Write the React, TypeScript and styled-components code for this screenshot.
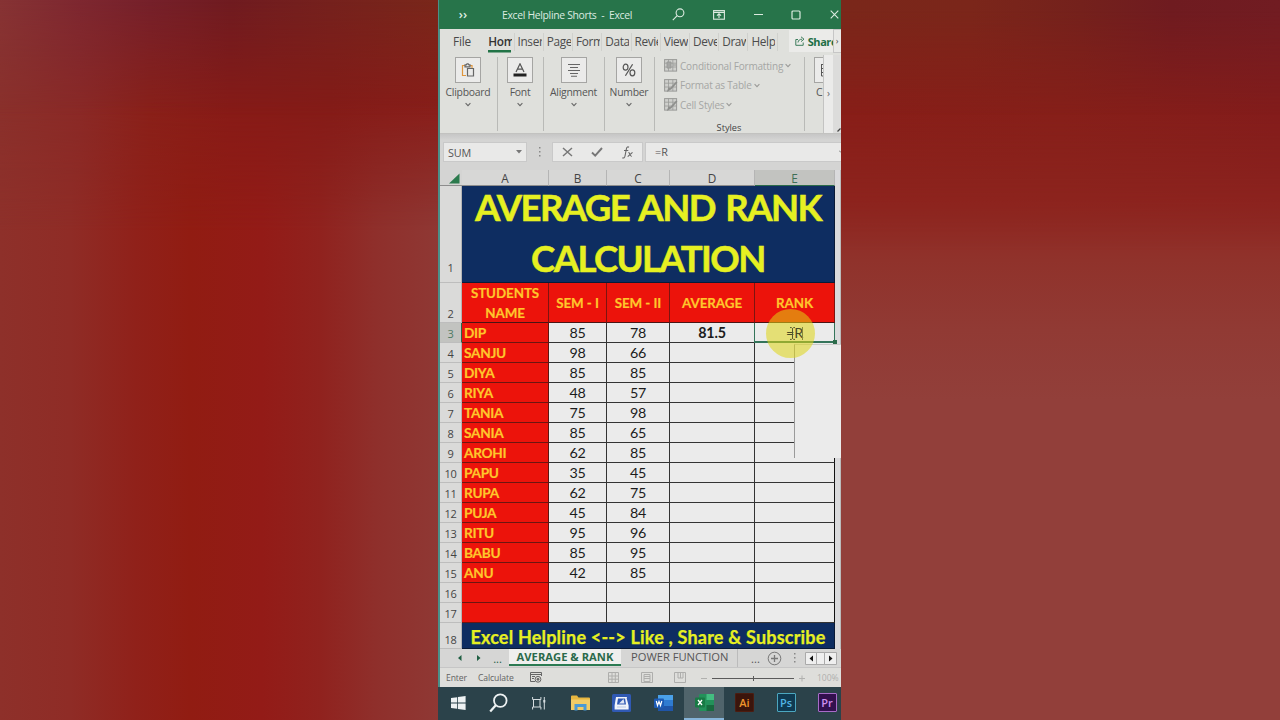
import React from "react";
import styled, { createGlobalStyle } from "styled-components";

const UI = `"Open Sans", "Noto Sans", sans-serif`;
const SHEET = `Lato, "Open Sans", sans-serif`;

const Global = createGlobalStyle`
  *, *::before, *::after { box-sizing: border-box; }
  body { margin: 0; background: #8f2a26; overflow: hidden; }
  svg { flex: none; }
`;

const Page = styled.main`
  display: grid;
  grid-template-columns: 438px 403px 439px;
  height: 720px;
  width: 1280px;
  overflow: hidden;
  font-family: ${UI};
`;

const Backdrop = styled.div<{ $side: "left" | "right" }>`
  display: grid;
  background: ${(p) =>
    p.$side === "left"
      ? "linear-gradient(90deg,#8e302a 0,#8f2c26 70px,#90211a 135px,#911c12 190px,#931b17 262px,#90221e 320px,#8f2f2b 375px,#8f3834 438px)"
      : "linear-gradient(180deg,#902620 200px,#90322b 260px,#913a34 330px,#923f3a 400px,#923f3a)"};
  > * { grid-area: 1 / 1; }
`;

const Fade = styled.div<{ $paint: string; $from: number; $to: number }>`
  background: linear-gradient(90deg, ${(p) => p.$paint});
  mask-image: linear-gradient(180deg, #000 ${(p) => p.$from}px, transparent ${(p) => p.$to}px);
`;

const Phone = styled.section`
  display: flex;
  flex-direction: column;
  width: 403px;
  height: 720px;
  overflow: hidden;
  position: relative;
  background: #d4d4d3;
`;

const Workbook = styled.div`
  display: flex;
  flex-direction: column;
  height: 687px;
  border-left: 2px solid #4b8f89;
`;

const TitleBar = styled.header`
  display: grid;
  grid-template-columns: 46px 172px 42px 40px 38px 38px 38px;
  align-items: center;
  justify-items: center;
  height: 29px;
  flex: none;
  margin-left: -1px;
  background: #27744a;
  color: #dcebe0;
  font-size: 11px;
  overflow: hidden;
`;
const TitleText = styled.span`
  font-size: 10.4px;
  letter-spacing: -0.32px;
  white-space: pre;
  justify-self: start;
  padding-left: 17px;
  padding-top: 1px;
`;
const More = styled.span`
  font-size: 12.5px;
  font-weight: 600;
  line-height: 12px;
  padding-left: 2px;
`;

const TabBar = styled.nav`
  display: flex;
  height: 26px;
  flex: none;
  background: #dfe0dc;
  color: #484848;
  font-size: 11.8px;
  padding-left: 13px;
`;
const FileTab = styled.span`
  width: 35.3px;
  line-height: 25px;
  letter-spacing: -0.2px;
  flex: none;
`;
const Tab = styled.span<{ $active?: boolean }>`
  width: 24px;
  margin-right: 5.3px;
  line-height: 25px;
  height: 24px;
  overflow: hidden;
  white-space: nowrap;
  letter-spacing: -0.35px;
  flex: none;
  font-weight: ${(p) => (p.$active ? 600 : 400)};
  color: ${(p) => (p.$active ? "#333" : "#4c4c4c")};
  background: ${(p) => (p.$active ? "linear-gradient(#217346,#217346) 0 21px / 23px 2.5px no-repeat" : "none")};
`;
const TabDivider = styled.i`
  width: 1px;
  margin: 4px 2.95px 4px -4px;
  background: #d0d1cd;
  flex: none;
`;
const Share = styled.span`
  display: flex;
  align-items: center;
  gap: 3px;
  width: 44px;
  height: 22px;
  margin: 1px 0 0 8px;
  padding-left: 6px;
  overflow: hidden;
  background: #ebebe9;
  color: #1f6e45;
  font-weight: 700;
  font-size: 11px;
  letter-spacing: -0.4px;
  flex: none;
`;
const TabScroll = styled.span`
  width: 9px;
  height: 24px;
  border: 1px solid #c6c6c6;
  background: #e8e8e6;
  font-size: 9px;
  line-height: 21px;
  padding-left: 2px;
  flex: none;
`;

const Ribbon = styled.div`
  display: grid;
  grid-template-columns: 58px 46px 61px 50px 150px 19px 1fr;
  height: 79px;
  flex: none;
  background: #dfe0dc;
  padding-top: 2px;
  border-bottom: 1px solid #c2c2c0;
`;
const Group = styled.div`
  display: flex;
  flex-direction: column;
  align-items: center;
  height: 74px;
  border-right: 1px solid #b9bab7;
  font-size: 10.4px;
  letter-spacing: -0.25px;
  color: #555;
  padding-right: 1px;
`;
const Tile = styled.span`
  display: grid;
  place-items: center;
  width: 26px;
  height: 26px;
  flex: none;
  border: 1px solid #a5a5a3;
  background: #ebebea;
`;
const GroupName = styled.span`
  line-height: 15px;
  margin: 2px 0;
`;
const StylesGroup = styled.div`
  height: 74px;
  padding: 0 0 0 9px;
  border-right: 1px solid #b9bab7;
  font-size: 10px;
  color: #a5a6a4;
`;
const StyleRow = styled.div`
  display: flex;
  align-items: center;
  gap: 2px;
  height: 19.5px;
  padding-bottom: 2px;
  white-space: nowrap;
  letter-spacing: -0.19px;
`;
const StylesName = styled.div`
  text-align: center;
  color: #444;
  font-size: 9.2px;
  line-height: 14px;
  padding: 5px 10px 0 0;
`;
const CutGroup = styled.div`
  display: flex;
  flex-direction: column;
  padding-left: 9px;
  overflow: hidden;
  color: #555;
  font-size: 10.6px;
`;
const CutName = styled.span`
  line-height: 15px;
  margin: 2px 0 0 2px;
`;
const RibbonScroll = styled.div`
  display: flex;
  align-items: flex-end;
  justify-content: flex-end;
  height: 78px;
  margin-top: -2px;
  position: relative;
  border-left: 9px solid #ebebea;
  box-shadow: -1px 0 #c3c3c2;
  background: #dcdcdb;
`;
const ScrollMark = styled.span`
  position: absolute;
  left: -6px;
  top: 32px;
  font-size: 10px;
  line-height: 12px;
  color: #666;
`;

const FormulaBar = styled.div`
  display: flex;
  align-items: center;
  height: 36px;
  flex: none;
  padding-left: 3px;
  background: linear-gradient(#c6c6c6, #d4d4d3 6px);
`;
const NameBox = styled.div`
  display: flex;
  align-items: center;
  justify-content: space-between;
  width: 84px;
  height: 20px;
  padding: 0 4px;
  background: #e9e9e8;
  border: 1px solid #c9c9c9;
  font-size: 10.8px;
  letter-spacing: -0.2px;
  color: #555;
`;
const Dots = styled.span`
  width: 25px;
  display: grid;
  place-items: center;
`;
const FormulaButtons = styled.div`
  display: flex;
  align-items: center;
  justify-content: space-between;
  width: 91px;
  height: 20px;
  padding: 0 8px 0 9px;
  background: #e9e9e8;
  border: 1px solid #c9c9c9;
`;
const FormulaInput = styled.div`
  display: flex;
  align-items: center;
  justify-content: space-between;
  flex: 1;
  height: 20px;
  margin-left: 2px;
  padding-left: 9px;
  background: #e9e9e8;
  border: 1px solid #c9c9c9;
  border-right: 0;
  font-size: 10.8px;
  line-height: 18px;
  color: #555;
`;

const GRID = "22px 87px 58px 63px 85px 80px 6px";
const HeadRow = styled.div`
  display: grid;
  grid-template-columns: ${GRID};
  grid-template-rows: 100%;
  height: 16px;
  flex: none;
`;
const HeadCell = styled.div<{ $active?: boolean }>`
  display: grid;
  place-items: center;
  font-size: 11.8px;
  line-height: 14px;
  padding-top: 1px;
  color: ${(p) => (p.$active ? "#3f6f57" : "#444")};
  background: ${(p) => (p.$active ? "#c2c3c0" : "#d7d7d6")};
  border-right: 1px solid #b5b5b5;
  border-bottom: 1px solid ${(p) => (p.$active ? "#2b6b4a" : "#8d8d8d")};
`;
const Corner = styled.div`
  display: flex;
  border-bottom: 1px solid #8d8d8d;
`;
const Row = styled.div<{ $h: number }>`
  display: grid;
  grid-template-columns: ${GRID};
  grid-template-rows: 100%;
  height: ${(p) => p.$h}px;
  flex: none;
`;
const RowNumber = styled.div<{ $active?: boolean; $lift?: number }>`
  display: flex;
  align-items: flex-end;
  justify-content: center;
  padding-bottom: ${(p) => p.$lift ?? 0}px;
  font-size: 11px;
  line-height: 17px;
  letter-spacing: -0.4px;
  color: ${(p) => (p.$active ? "#4f7a64" : "#444")};
  background: ${(p) => (p.$active ? "#c2c3c0" : "#dadad9")};
  border-bottom: 1px solid #bdbdbd;
  border-right: 1px solid ${(p) => (p.$active ? "#2b6b4a" : "#b5b5b5")};
`;
const Banner = styled.div<{ $size: number; $leading: number; $track: number; $gap?: number; $pull?: number; $stroke: number }>`
  grid-column: 2 / 7;
  background: #0e2d61;
  color: #e6f022;
  border: 1px solid #0a1a36;
  border-left: 0;
  border-top: 0;
  font-family: ${SHEET};
  font-weight: 700;
  font-size: ${(p) => p.$size}px;
  line-height: ${(p) => p.$leading}px;
  letter-spacing: ${(p) => p.$track}px;
  word-spacing: ${(p) => p.$gap ?? 0}px;
  -webkit-text-stroke: ${(p) => p.$stroke}px #e6f022;
  text-align: center;
  white-space: pre;
  > div { margin-top: ${(p) => p.$pull ?? 0}px; }
`;
const Gutter = styled.div`
  background: #dadadc;
  box-shadow: inset -1px 0 #bbb;
`;
const Heading = styled.div`
  display: grid;
  place-items: center;
  text-align: center;
  white-space: pre;
  background: #ec130b;
  color: #ffc62c;
  border-right: 1px solid #7d1410;
  border-bottom: 1px solid #4a1414;
  font: 700 13.4px/20px ${SHEET};
  letter-spacing: -0.08px;
  -webkit-text-stroke: 0.2px #ffc62c;
`;
const Student = styled.div`
  background: #ec130b;
  color: #ffc62c;
  padding-left: 2px;
  border-right: 1px solid #5d1410;
  border-bottom: 1px solid #6d1511;
  font: 700 13.7px/20px ${SHEET};
  letter-spacing: -0.32px;
  -webkit-text-stroke: 0.2px #ffc62c;
`;
const Cell = styled.div<{ $bold?: boolean; $edit?: boolean; $last?: boolean }>`
  text-align: center;
  background: #ebebeb;
  color: #1c1c1c;
  border-right: 1px solid ${(p) => (p.$last ? "#111" : "#333")};
  border-bottom: 1px solid #333;
  font: ${(p) => (p.$bold ? 700 : 400)} 14.3px/20px ${SHEET};
  letter-spacing: -0.2px;
  ${(p) => p.$edit && "box-shadow: -1px 0 #34745a, inset 0 -1px #34745a; border-color: #34745a;"}
`;

const SheetTabs = styled.div`
  display: flex;
  height: 19px;
  flex: none;
  background: #d6d6d5;
  border-bottom: 1px solid #c6c6c6;
  font-size: 11.2px;
  color: #555;
`;
const SheetNav = styled.div`
  display: flex;
  align-items: center;
  justify-content: space-between;
  width: 69px;
  padding: 0 7px 0 16px;
  color: #1f6045;
`;
const ActiveSheet = styled.span`
  width: 112px;
  height: 17px;
  text-align: center;
  background: #efefee;
  border-bottom: 2px solid #2b7a52;
  color: #2b6a4b;
  font-weight: 700;
  line-height: 15px;
  letter-spacing: 0.02px;
  white-space: nowrap;
`;
const OtherSheet = styled.span`
  width: 117px;
  padding-left: 10px;
  line-height: 15px;
  letter-spacing: -0.02px;
  white-space: nowrap;
  border-right: 1px solid #bbb;
`;
const SheetTools = styled.div`
  display: flex;
  align-items: center;
  gap: 7px;
  flex: 1;
  padding-left: 13px;
`;

const StatusBar = styled.div`
  display: flex;
  align-items: center;
  height: 19px;
  flex: none;
  padding-left: 6px;
  background: #dededb;
  color: #666;
  font-size: 8.6px;
  letter-spacing: -0.1px;
`;
const StatusWord = styled.span<{ $w: number; $faint?: boolean }>`
  width: ${(p) => p.$w}px;
  flex: none;
  color: ${(p) => (p.$faint ? "#b0b0ae" : "#626262")};
`;

const Taskbar = styled.footer`
  display: grid;
  grid-template-columns: 40px 40px 41px 42px 41px 42px 40px 41px 42px 40px;
  height: 33px;
  flex: none;
  background: #2b424a;
`;
const TaskItem = styled.span<{ $active?: boolean }>`
  display: grid;
  place-items: center;
  background: ${(p) => (p.$active ? "#50646b" : "transparent")};
  border-bottom: 2px solid ${(p) => (p.$active ? "#86b4d8" : "transparent")};
`;
const AdobeBadge = styled.span<{ $bg: string; $fg: string; $line: string }>`
  display: grid;
  place-items: center;
  width: 19px;
  height: 19px;
  border: 1px solid ${(p) => p.$line};
  border-radius: 1px;
  background: ${(p) => p.$bg};
  color: ${(p) => p.$fg};
  font: 600 11px/15px ${UI};
`;

const Suggestions = styled.div`
  position: absolute;
  left: 356px;
  top: 344px;
  width: 47px;
  height: 114px;
  background: #ebebeb;
  border-left: 1px solid #9a9a9a;
  border-top: 1px solid #c9c9c9;
`;
const FillHandle = styled.div`
  position: absolute;
  left: 395px;
  top: 340px;
  width: 4px;
  height: 4px;
  background: #2b6b4a;
`;
const ClickHalo = styled.div`
  position: absolute;
  left: 328px;
  top: 309px;
  width: 49px;
  height: 49px;
  border-radius: 50%;
  background: rgba(222, 214, 20, 0.55);
`;
const EditText = styled.div`
  position: absolute;
  left: 348px;
  top: 323px;
  display: flex;
  font: 400 14.3px/20px ${SHEET};
  color: #4a4926;
`;
const Beam = styled.svg`
  position: absolute;
  left: 350px;
  top: 327px;
`;

const Chevron = ({ w = 6, c = "#666" }: { w?: number; c?: string }) => (
  <svg width={w} height="5" viewBox="0 0 6 5">
    <path d="M.6 1.2 3 3.6 5.4 1.2" fill="none" stroke={c} strokeWidth="1.1" />
  </svg>
);

const StyleIcon = ({ kind }: { kind: number }) => (
  <svg width="14" height="13" viewBox="0 0 14 13" fill="none" stroke="#999a98">
    <rect x=".6" y=".6" width="12" height="11.5" fill="#cfd0cd" />
    <path d="M.6 4.2h12M.6 8h12M4.5.6v11.5M8.8.6v11.5" strokeWidth=".8" />
    {kind === 0 ? (
      <path d="M3 3h4v6H3zM9 6h3" fill="#a5a6a4" />
    ) : (
      <path d="m12.8 3-6 6.5-2.3 1.4.9-2.4" stroke="#8e8f8d" strokeWidth="1.8" />
    )}
  </svg>
);

const students: [string, string, string][] = [
  ["DIP", "85", "78"],
  ["SANJU", "98", "66"],
  ["DIYA", "85", "85"],
  ["RIYA", "48", "57"],
  ["TANIA", "75", "98"],
  ["SANIA", "85", "65"],
  ["AROHI", "62", "85"],
  ["PAPU", "35", "45"],
  ["RUPA", "62", "75"],
  ["PUJA", "45", "84"],
  ["RITU", "95", "96"],
  ["BABU", "85", "95"],
  ["ANU", "42", "85"],
  ["", "", ""],
  ["", "", ""],
];

const tabs = ["Hom", "Inser", "Page", "Form", "Data", "Revie", "View", "Deve", "Draw", "Help"];

export default function App() {
  return (
    <Page>
      <Global />
      <Backdrop $side="left">
        <Fade
          $from={100}
          $to={230}
          $paint="#8a302b,#8a2926 80px,#892019 150px,#871b17 230px,#841b17 330px,#881d19 438px"
        />
        <Fade
          $from={0}
          $to={115}
          $paint="#863334,#7d2730 80px,#75202a 150px,#6f1b20 230px,#75211d 330px,#79271a 438px"
        />
      </Backdrop>

      <Phone>
        <Workbook>
          <TitleBar>
            <More>››</More>
            <TitleText>Excel Helpline Shorts  -  Excel</TitleText>
            <svg width="13" height="13" viewBox="0 0 13 13" fill="none" stroke="#dcebe0" strokeWidth="1.1">
              <circle cx="8" cy="4.8" r="3.9" />
              <path d="m5.2 7.7-4.4 4.5" />
            </svg>
            <svg width="12" height="10" viewBox="0 0 12 10" fill="none" stroke="#dcebe0" strokeWidth="1.1">
              <rect x=".6" y=".6" width="10.8" height="8.6" />
              <path d="M.6 2.4h10.8M6 8V4M4 5.7 6 3.8l2 1.9" />
            </svg>
            <svg width="9" height="3" viewBox="0 0 9 3">
              <path d="M0 1.5h9" stroke="#dcebe0" />
            </svg>
            <svg width="10" height="10" viewBox="0 0 10 10">
              <rect x="1" y="1" width="8" height="8" rx="1" fill="none" stroke="#dcebe0" strokeWidth="1.2" />
            </svg>
            <svg width="9" height="9" viewBox="0 0 9 9">
              <path d="m.7.7 7.6 7.6M8.3.7.7 8.3" stroke="#dcebe0" strokeWidth="1.1" />
            </svg>
          </TitleBar>

          <TabBar>
            <FileTab>File</FileTab>
            {tabs.map((t, i) => (
              <React.Fragment key={t}>
                <Tab $active={i === 0}>{t}</Tab>
                <TabDivider />
              </React.Fragment>
            ))}
            <Share>
              <svg width="10" height="10" viewBox="0 0 10 10" fill="none" stroke="#3d7d5c">
                <path d="M3 3.5H.8v5.8h7.4V6.5M3 6.5C3.2 4.3 4.8 3.2 7 3.2M6 .8l3 2.4-3 2.4" />
              </svg>
              Share
            </Share>
            <TabScroll>›</TabScroll>
          </TabBar>

          <Ribbon>
            <Group>
              <Tile>
                <svg width="14" height="14" viewBox="0 0 14 14" fill="none" strokeWidth="1.2">
                  <path d="M5 12.5H1.5v-10H4M9 2.5h2V5" stroke="#e0963c" />
                  <path d="M4 3.8V1.8h1.3L6 .8h1.2l.7 1H9v2z" stroke="#666" />
                  <path d="M6.5 5.5h6v7.5h-6z" stroke="#666" />
                </svg>
              </Tile>
              <GroupName>Clipboard</GroupName>
              <Chevron />
            </Group>
            <Group>
              <Tile>
                <svg width="14" height="14" viewBox="0 0 14 14" fill="none">
                  <path d="M3 9 7 .8 11 9M4.4 6.2h5.2" stroke="#555" strokeWidth="1.2" />
                  <path d="M.5 12h13" stroke="#222" strokeWidth="3" />
                </svg>
              </Tile>
              <GroupName>Font</GroupName>
              <Chevron />
            </Group>
            <Group>
              <Tile>
                <svg width="14" height="14" viewBox="0 0 14 14" stroke="#666" strokeWidth="1.1">
                  <path d="M1 1.5h12M3 4.5h8M1 7.5h12M3 10.5h8M4 13.2h6" />
                </svg>
              </Tile>
              <GroupName>Alignment</GroupName>
              <Chevron />
            </Group>
            <Group>
              <Tile>
                <svg width="14" height="14" viewBox="0 0 14 14" fill="none" stroke="#555" strokeWidth="1.2">
                  <ellipse cx="3.6" cy="4.2" rx="2.4" ry="3" />
                  <ellipse cx="10.4" cy="9.8" rx="2.4" ry="3" />
                  <path d="M10.6 1.2 3.4 12.8" />
                </svg>
              </Tile>
              <GroupName>Number</GroupName>
              <Chevron />
            </Group>
            <StylesGroup>
              {["Conditional Formatting", "Format as Table", "Cell Styles"].map((s, i) => (
                <StyleRow key={s}>
                  <StyleIcon kind={i} />
                  <span>{s}</span>
                  <Chevron c="#9a9a98" />
                </StyleRow>
              ))}
              <StylesName>Styles</StylesName>
            </StylesGroup>
            <CutGroup>
              <Tile>
                <svg width="14" height="14" viewBox="0 0 14 14" fill="none" stroke="#555">
                  <path d="M1.5 1.5h12M1.5 5.5h12M1.5 9.5h12M1.5 13h12M1.5 1v12" />
                </svg>
              </Tile>
              <CutName>C</CutName>
            </CutGroup>
            <RibbonScroll>
              <ScrollMark>›</ScrollMark>
              <svg width="4" height="6" viewBox="0 0 4 6">
                <path d="m.5 4.5 3-3" stroke="#444" strokeWidth="1.2" />
              </svg>
            </RibbonScroll>
          </Ribbon>

          <FormulaBar>
            <NameBox>
              SUM
              <svg width="6" height="4" viewBox="0 0 6 4">
                <path d="M0 0h6L3 3.6z" fill="#777" />
              </svg>
            </NameBox>
            <Dots>
              <svg width="2" height="10" viewBox="0 0 2 10" fill="#888">
                <path d="M0 0h1.5v1.5H0zM0 4h1.5v1.5H0zM0 8h1.5v1.5H0z" />
              </svg>
            </Dots>
            <FormulaButtons>
              <svg width="11" height="10" viewBox="0 0 11 10">
                <path d="m1 1 9 8M10 1 1 9" stroke="#777" strokeWidth="1.5" />
              </svg>
              <svg width="12" height="10" viewBox="0 0 12 10">
                <path d="M1 5.5 4.2 8.6 11 1" fill="none" stroke="#777" strokeWidth="1.9" />
              </svg>
              <svg width="13" height="13" viewBox="0 0 13 13" fill="none" stroke="#666" strokeWidth="1.1">
                <path d="M8 1.2C6.6.4 5.7 1.2 5.4 2.8L4 10c-.3 1.7-1.3 2.5-2.7 1.8M3 4.5h4.3M7.4 6.5c1.3-.6 1.5 4 3.4 4M11.5 6.4l-4.8 4.3" />
              </svg>
            </FormulaButtons>
            <FormulaInput>
              =R
              <svg width="2" height="4" viewBox="0 0 2 4">
                <path d="m0 .5 2 2" stroke="#777" />
              </svg>
            </FormulaInput>
          </FormulaBar>

          <HeadRow>
            <Corner>
              <svg width="22" height="15" viewBox="0 0 22 15">
                <path d="M19.500 3.500v10H9z" fill="#2b7a4d" />
              </svg>
            </Corner>
            {["A", "B", "C", "D", "E"].map((c) => (
              <HeadCell key={c} $active={c === "E"}>
                {c}
              </HeadCell>
            ))}
            <Gutter />
          </HeadRow>

          <Row $h={97}>
            <RowNumber $lift={6}>1</RowNumber>
            <Banner $size={36.5} $leading={51} $track={-1.55} $gap={3} $pull={-4} $stroke={0.5}>
              <div>{"AVERAGE AND RANK\nCALCULATION"}</div>
            </Banner>
            <Gutter />
          </Row>
          <Row $h={40}>
            <RowNumber>2</RowNumber>
            {["STUDENTS\nNAME", "SEM - I", "SEM - II", "AVERAGE", "RANK"].map((h) => (
              <Heading key={h}>{h}</Heading>
            ))}
            <Gutter />
          </Row>
          {students.map(([name, first, second], i) => (
            <Row key={i} $h={20}>
              <RowNumber $active={i === 0}>{i + 3}</RowNumber>
              <Student>{name}</Student>
              <Cell>{first}</Cell>
              <Cell>{second}</Cell>
              <Cell $bold>{i === 0 ? "81.5" : ""}</Cell>
              <Cell $edit={i === 0} $last />
              <Gutter />
            </Row>
          ))}
          <Row $h={26}>
            <RowNumber>18</RowNumber>
            <Banner $size={18} $leading={28} $track={0.2} $stroke={0.25}>
              {"Excel Helpline <--> Like , Share & Subscribe"}
            </Banner>
            <Gutter />
          </Row>

          <SheetTabs>
            <SheetNav>
              <svg width="26" height="8" viewBox="0 0 26 8" fill="#1f5f43">
                <path d="M5.500 1v6L2 4zM21 1v6l3.500-3z" />
              </svg>
              <span>...</span>
            </SheetNav>
            <ActiveSheet>AVERAGE &amp; RANK</ActiveSheet>
            <OtherSheet>POWER FUNCTION</OtherSheet>
            <SheetTools>
              <span>...</span>
              <svg width="15" height="15" viewBox="0 0 15 15" fill="none" stroke="#777">
                <circle cx="7.500" cy="7.500" r="6.300" />
                <path d="M7.500 4v7M4 7.500h7" strokeWidth="1.300" />
              </svg>
              <svg width="9" height="10" viewBox="2 0 9 10" fill="#888">
                <path d="M7 0h1.500v1.500H7zM7 4h1.500v1.500H7zM7 8h1.500v1.500H7z" />
              </svg>
              <svg width="33" height="13" viewBox="0 0 33 13">
                <path d="M.5.500h11v12H.5zM11.500.500h8v12h-8zM19.500.500h12v12h-12z" fill="#efefef" stroke="#aaa" />
                <path d="M8 3.500v6L4.500 6.500zM24 3.500v6l3.500-3z" fill="#111" />
              </svg>
            </SheetTools>
          </SheetTabs>

          <StatusBar>
            <StatusWord $w={32}>Enter</StatusWord>
            <StatusWord $w={52}>Calculate</StatusWord>
            <svg width="12" height="11" viewBox="0 0 12 11" fill="none" stroke="#666">
              <path d="M5 9.500H.5v-9h11V4M.5 2.500h11M2 4.500h3M2 6.500h2" />
              <circle cx="8" cy="7.300" r="2.900" />
              <circle cx="8" cy="7.300" r="1" fill="#666" />
            </svg>
            <svg width="157" height="12" viewBox="0 0 157 12" fill="none" stroke="#aeaeac">
              <path d="M66.500.500h10v10h-10zM66.500 4h10M66.500 7.200h10M70 .500v10M73.300.500v10" />
              <path d="M99.500.500h11v10h-11zM102 2.500h6v7h-6zM102 4.500h6M102 6.500h6" />
              <path d="M132.500.500h11v10h-11zM136 .500v5.500h5V.500M138.500.500V6" />
            </svg>
            <svg width="118" height="12" viewBox="0 0 118 12" stroke="#b0b0ae">
              <path d="M2 6.500h6M100 6.500h6M103 3.500v6" />
              <path d="M13 6.500h82M54.500 4v5" stroke="#5a5a5a" />
            </svg>
            <StatusWord $w={26} $faint>100%</StatusWord>
          </StatusBar>
        </Workbook>

        <Taskbar>
          <TaskItem>
            <svg width="15" height="14" viewBox="0 0 15 14" fill="#eef2f3">
              <path d="M0 2.100 6.200 1.200v5.400H0zM7 1.100 14.600 0v6.600H7zM0 7.400h6.200v5.400L0 11.900zM7 7.400h7.600V14L7 12.900z" />
            </svg>
          </TaskItem>
          <TaskItem>
            <svg width="19" height="20" viewBox="0 0 19 20" fill="none" stroke="#eef2f3">
              <circle cx="11.300" cy="7.600" r="6.300" strokeWidth="1.800" />
              <path d="m6.800 12.200-5.600 6.300" strokeWidth="2.200" />
            </svg>
          </TaskItem>
          <TaskItem>
            <svg width="14" height="14" viewBox="0 0 14 14" fill="none" stroke="#d5dcdf">
              <path d="M.6 1v2.500h8.300V1M.6 13.500V11h8.300v2.500M1.500 3.500V11M8 3.500V11M12.300 1v12.500" />
              <path d="M11.300 4h2v2.500h-2z" fill="#d5dcdf" stroke="none" />
            </svg>
          </TaskItem>
          <TaskItem>
            <svg width="19" height="16" viewBox="0 0 19 16">
              <path d="M0 1.500Q0 .500 1 .500h5l1.500 2H18q1 0 1 1V15H0z" fill="#e7b640" />
              <path d="M0 4.500h19V15H0z" fill="#f2cc66" />
              <path d="M3.500 15.500V9h12v6.500h-3V12h-6v3.500z" fill="#4b9ad4" />
            </svg>
          </TaskItem>
          <TaskItem>
            <svg width="19" height="18" viewBox="0 0 19 18">
              <rect width="19" height="18" rx="1.500" fill="#3059b4" />
              <path d="M4 3h11l-.3 1.500H6L5 10.500h9l-.9-6h1.600l1.900 7V15.500h-14V11.500z" fill="#f1f4fa" />
              <path d="m7 9.600 4.500-4.500 1 4.500z" fill="#dfe6f5" />
              <path d="M5 13h9" stroke="#b9c8e6" />
            </svg>
          </TaskItem>
          <TaskItem>
            <svg width="19" height="16" viewBox="0 0 19 16">
              <rect x="4" width="15" height="16" rx="1" fill="#2f7bd0" />
              <path d="M4 0h15v5H4z" fill="#4aa0e8" />
              <path d="M4 11h15v5H4z" fill="#1f55a8" />
              <rect y="3.500" width="10" height="9.500" rx="1" fill="#1d5bb4" />
              <path d="m2.300 6 1.200 4.500L5 6.500l1.500 4L7.800 6" fill="none" stroke="#fff" strokeWidth="1.200" />
            </svg>
          </TaskItem>
          <TaskItem $active>
            <svg width="19" height="17" viewBox="0 0 19 17">
              <rect x="4" width="15" height="17" rx="1" fill="#23915a" />
              <path d="M11.500 0H19v6h-7.500z" fill="#43bd80" />
              <path d="M11.500 11H19v6h-7.500z" fill="#176a3e" />
              <rect y="3.500" width="10" height="10" rx="1" fill="#187a45" />
              <path d="m3 6 4 5M7 6l-4 5" stroke="#fff" strokeWidth="1.300" />
            </svg>
          </TaskItem>
          <TaskItem>
            <AdobeBadge $bg="#3b150c" $fg="#ef962c" $line="#4c1c10">Ai</AdobeBadge>
          </TaskItem>
          <TaskItem>
            <AdobeBadge $bg="#0f3a52" $fg="#53b4e4" $line="#4ca7c0">Ps</AdobeBadge>
          </TaskItem>
          <TaskItem>
            <AdobeBadge $bg="#33104e" $fg="#cf8ff0" $line="#a76cc8">Pr</AdobeBadge>
          </TaskItem>
        </Taskbar>

        <FillHandle />
        <Suggestions />
        <ClickHalo />
        <EditText>=R</EditText>
        <Beam width="16" height="13" viewBox="0 0 16 13" fill="none" stroke="#55552f">
          <path d="M2 .6h1.500l1 1 1-1H7M4.500 1.500v10M2 12.400h1.500l1-1 1 1H7" />
          <path d="M14.500 0v13" stroke="#8b8937" />
        </Beam>
      </Phone>

      <Backdrop $side="right">
        <Fade $from={110} $to={250} $paint="#881e18,#861f19 220px,#831c1b" />
        <Fade
          $from={10}
          $to={115}
          $paint="#7a271a,#7b261a 130px,#74211c 240px,#6f1b20 330px,#711c22"
        />
      </Backdrop>
    </Page>
  );
}
